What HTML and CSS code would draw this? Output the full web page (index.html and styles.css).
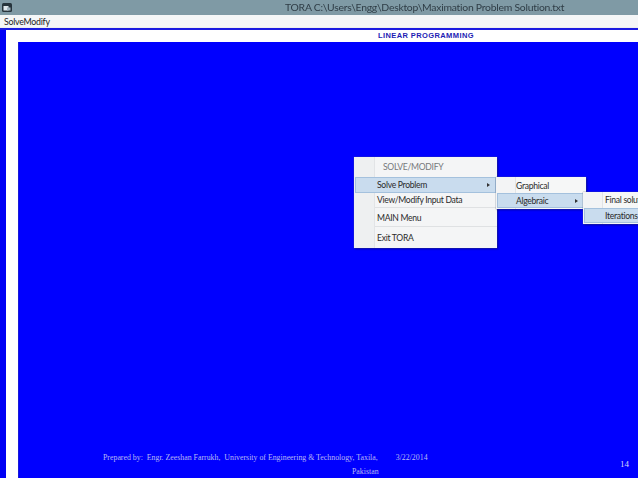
FILE: index.html
```html
<!DOCTYPE html>
<html lang="en">
<head>
<meta charset="utf-8">
<title>TORA</title>
<link rel="stylesheet" href="styles.css">
</head>
<body>
<div class="app">
  <header class="titlebar">
    <svg class="appicon" width="10" height="9" viewBox="0 0 10 9"><rect x="0" y="0" width="10" height="9" rx="1.5" fill="#26343c"/><rect x="1.5" y="3" width="5" height="4.5" fill="#dfe8ec"/><rect x="5" y="4.5" width="3.5" height="3" fill="#9fb4bf"/></svg>
    <div class="title">TORA C:\Users\Engg\Desktop\Maximation Problem Solution.txt</div>
  </header>
  <nav class="menubar">SolveModify</nav>
  <main class="stage">
    <div class="frame">
      <h1 class="heading">LINEAR PROGRAMMING</h1>
      <section class="panel">
        <footer class="foot">
          <div class="foot-line"><span class="prep">Prepared by:&nbsp; Engr. Zeeshan Farrukh,&nbsp; University of Engineering &amp; Technology, Taxila,</span><span class="date">3/22/2014</span><span class="page">14</span></div>
          <div class="foot-line2">Pakistan</div>
        </footer>
      </section>
    </div>
  </main>
  <div class="menu menu-main">
    <div class="item head"><span>SOLVE/MODIFY</span></div>
    <div class="item active"><span>Solve Problem</span><i class="arrow"></i></div>
    <div class="item sep"><span>View/Modify Input Data</span></div>
    <div class="item sep tall"><span>MAIN Menu</span></div>
    <div class="item tall last"><span>Exit TORA</span></div>
  </div>
  <div class="menu menu-sub">
    <div class="item"><span>Graphical</span></div>
    <div class="item active"><span>Algebraic</span><i class="arrow"></i></div>
  </div>
  <div class="menu menu-sub2">
    <div class="item"><span>Final solution</span></div>
    <div class="item active"><span>Iterations</span></div>
  </div>
</div>
</body>
</html>
```
FILE: styles.css
```css
* { box-sizing: border-box; }
html, body { margin: 0; height: 100%; overflow: hidden; }
body { font-family: Lato, Roboto, sans-serif; }
.app { position: relative; width: 638px; height: 478px; display: flex; flex-direction: column; overflow: hidden; background: #0000f5; }
.titlebar { height: 15px; flex: none; background: #7f9aa5; display: flex; align-items: center; position: relative; padding-left: 2px; }
.appicon { flex: none; }
.title { margin-left: 273px; font-size: 10.4px; letter-spacing: -0.25px; line-height: 15px; color: #2f3d46; white-space: nowrap; filter: blur(0.25px); }
.menubar { height: 13px; flex: none; background: #f4f6f7; font-size: 8.8px; letter-spacing: -0.25px; line-height: 13px; padding-left: 4px; color: #222; border-bottom: 1px solid #eceeef; }
.stage { flex: 1; min-height: 0; border-top: 2px solid #1a1ae0; padding-left: 6px; background: #0000f5; display: flex; }
.frame { flex: 1; display: flex; flex-direction: column; background: #fff; padding-left: 12px; }
.heading { margin: 0; height: 12px; flex: none; padding-left: 360px; font-family: "Liberation Sans", sans-serif; font-weight: 700; font-size: 7.5px; line-height: 11px; letter-spacing: 0.4px; color: #1d1db4; white-space: nowrap; }
.panel { flex: 1; background: #0000ff; display: flex; flex-direction: column; justify-content: flex-end; border-left: 1px solid #1a1ad8; }
.foot { font-family: "Liberation Serif", serif; font-size: 7.85px; color: #b9b9f4; padding-bottom: 1px; line-height: 10px; }
.foot-line { display: flex; padding-left: 84px; height: 12px; position: relative; margin-bottom: 2px; white-space: nowrap; }
.date { margin-left: 18px; }
.page { margin-left: auto; margin-right: 9px; margin-top: 6px; font-size: 9px; color: #d5d5fa; }
.foot-line2 { padding-left: 333px; }
.menu { position: absolute; background: #f3f4f5; box-shadow: 0 0 1px #5a6a80, 1px 1px 2px rgba(0, 0, 40, .45); font-size: 8.6px; letter-spacing: -0.3px; color: #2a2a2a; white-space: nowrap; }
.item { display: flex; align-items: center; justify-content: space-between; position: relative; }
.item.active { background: #c9dcee; box-shadow: inset 0 0 0 1px #a4c1dd; }
.arrow { width: 0; height: 0; border-left: 3px solid #333; border-top: 2.5px solid transparent; border-bottom: 2.5px solid transparent; }
.menu-main { left: 354px; top: 157px; width: 143px; height: 91px; background: linear-gradient(to right, #eef0f1 20px, #e2e4e6 20px, #e2e4e6 21px, #f4f5f6 21px); }
.menu-main .item { padding: 0 6px 0 23px; height: 15px; }
.menu-main .head { height: 20px; color: #77797c; padding-left: 29px; }
.menu-main .active { height: 16px; margin: 0 1px; padding-left: 22px; }
.menu-main .sep { margin-left: 21px; padding-left: 2px; border-bottom: 1px solid #dfe1e3; }
.menu-main .sep.tall { height: 19px; padding-top: 2px; }
.menu-main .last { height: 20px; padding-top: 1px; }
.menu-sub { left: 496px; top: 177px; width: 90px; height: 32px; background: linear-gradient(to right, #f3f4f5 19px, #e2e4e6 19px, #e2e4e6 20px, #f6f7f7 20px); }
.menu-sub .item { height: 16px; margin: 0 1px; padding: 1px 7px 0 19px; }
.menu-sub .active { height: 15px; padding-top: 0; }
.menu-sub2 { left: 583px; top: 192px; width: 70px; height: 32px; background: linear-gradient(to right, #f3f4f5 19px, #e2e4e6 19px, #e2e4e6 20px, #f6f7f7 20px); }
.menu-sub2 .item { height: 16px; margin-left: 1px; padding-left: 21px; }
.menu-sub2 .active { height: 15px; }
```
